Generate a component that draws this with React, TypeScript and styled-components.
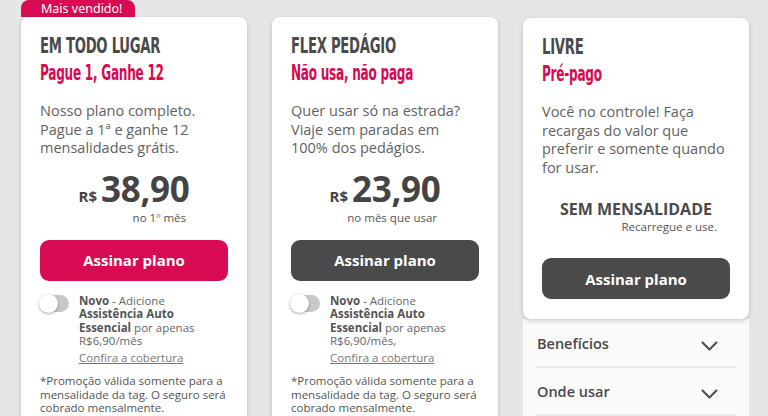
import React from 'react';
import styled, { createGlobalStyle } from 'styled-components';

const GlobalStyle = createGlobalStyle`
  body {
    margin: 0;
    background: #e6e6e6;
    font-family: 'Open Sans', 'Noto Sans', sans-serif;
    overflow: hidden;
  }
`;

const RED = '#d70a53';
const DARK = '#4a4a4a';

type Plan = {
  title: string;
  subtitle: string;
  desc: string;
  featured?: boolean;
  price?: string;
  priceNote?: string;
  extraNote?: string;
};

const plans: Plan[] = [
  {
    title: 'EM TODO LUGAR',
    subtitle: 'Pague 1, Ganhe 12',
    desc: 'Nosso plano completo. Pague a 1ª e ganhe 12 mensalidades grátis.',
    featured: true,
    price: '38,90',
    priceNote: 'no 1º mês',
    extraNote: 'R$6,90/mês',
  },
  {
    title: 'FLEX PEDÁGIO',
    subtitle: 'Não usa, não paga',
    desc: 'Quer usar só na estrada? Viaje sem paradas em 100% dos pedágios.',
    price: '23,90',
    priceNote: 'no mês que usar',
    extraNote: 'R$6,90/mês,',
  },
];

export default function App() {
  return (
    <>
      <GlobalStyle />
      <Page>
        {plans.map((p) => (
          <Column key={p.title}>
            <Tag $show={!!p.featured}>Mais vendido!</Tag>
            <Card>
              <Title>{p.title}</Title>
              <Subtitle>{p.subtitle}</Subtitle>
              <Desc>{p.desc}</Desc>
              <PriceBox>
                <PriceRow>
                  <Currency>R$</Currency>
                  <Amount>{p.price}</Amount>
                </PriceRow>
                <PriceNote>{p.priceNote}</PriceNote>
              </PriceBox>
              <SubscribeButton $primary={!!p.featured}>Assinar plano</SubscribeButton>
              <AddonRow>
                <Toggle>
                  <Knob />
                </Toggle>
                <AddonText>
                  <b>Novo</b> - Adicione <b>Assistência Auto Essencial</b> por apenas{' '}
                  {p.extraNote}
                  <AddonLink>Confira a cobertura</AddonLink>
                </AddonText>
              </AddonRow>
              <Footnote>
                *Promoção válida somente para a mensalidade da tag. O seguro será cobrado mensalmente.
              </Footnote>
            </Card>
          </Column>
        ))}
        <Column>
          <Tag $show={false}>Mais vendido!</Tag>
          <Card $short>
            <Title>LIVRE</Title>
            <Subtitle>Pré-pago</Subtitle>
            <Desc>Você no controle! Faça recargas do valor que preferir e somente quando for usar.</Desc>
            <NoFee>
              <NoFeeTitle>SEM MENSALIDADE</NoFeeTitle>
              <PriceNote>Recarregue e use.</PriceNote>
            </NoFee>
            <SubscribeButton $primary={false}>Assinar plano</SubscribeButton>
          </Card>
          <Accordion>
            {['Benefícios', 'Onde usar'].map((label) => (
              <AccordionItem key={label}>
                <span>{label}</span>
                <svg width="17" height="10" viewBox="0 0 17 10" fill="none">
                  <path d="M1.5 1.5l7 7 7-7" stroke="#4a4a4a" strokeWidth="2" strokeLinecap="round" strokeLinejoin="round" />
                </svg>
              </AccordionItem>
            ))}
          </Accordion>
        </Column>
      </Page>
    </>
  );
}

const Page = styled.div`
  display: flex;
  gap: 25px;
  padding-left: 21px;
  height: 416px;
  overflow: hidden;
`;

const Column = styled.div`
  width: 226px;
  display: flex;
  flex-direction: column;
`;

const Tag = styled.div<{ $show: boolean }>`
  visibility: ${(p) => (p.$show ? 'visible' : 'hidden')};
  align-self: flex-start;
  width: 114px;
  height: 18px;
  box-sizing: border-box;
  padding-left: 20px;
  background: ${RED};
  border-radius: 8px 8px 0 0;
  color: #fff;
  font-family: 'Noto Sans', sans-serif;
  font-size: 12.5px;
  line-height: 17px;
`;

const Card = styled.div<{ $short?: boolean }>`
  position: relative;
  z-index: 1;
  background: #fff;
  border-radius: 8px;
  box-shadow: 0 2px 5px rgba(0, 0, 0, 0.18);
  padding: 18px 19px ${(p) => (p.$short ? '20px' : '40px')};
  color: ${DARK};
`;

const Title = styled.div`
  font-family: 'DejaVu Sans Condensed', sans-serif;
  font-weight: bold;
  font-size: 21px;
  letter-spacing: -0.4px;
  line-height: 23px;
  color: #4a4a4a;
  white-space: nowrap;
  transform: scaleX(0.7);
  transform-origin: left center;
`;

const Subtitle = styled(Title)`
  color: ${RED};
  margin-top: 4px;
  transform: scaleX(0.64);
`;

const Desc = styled.p`
  margin: 17px 0 0;
  font-size: 14.5px;
  line-height: 18.5px;
  color: #626262;
`;

const PriceBox = styled.div`
  display: flex;
  flex-direction: column;
  align-items: center;
  margin-top: 12px;
`;

const PriceRow = styled.div`
  display: flex;
  align-items: baseline;
  gap: 4px;
  color: #444;
`;

const Currency = styled.span`
  font-size: 15px;
  font-weight: bold;
`;

const Amount = styled.span`
  font-size: 35px;
  font-weight: bold;
  line-height: 38px;
  letter-spacing: -0.3px;
`;

const PriceNote = styled.div`
  align-self: flex-end;
  margin-top: 3px;
  margin-right: 42px;
  font-size: 11.5px;
  color: #555;
  line-height: 14px;
`;

const NoFee = styled.div`
  display: flex;
  flex-direction: column;
  align-items: center;
  margin-top: 22px;
  margin-bottom: 24px;
  & > div:last-child {
    margin-top: 1px;
    margin-right: 13px;
  }
`;

const NoFeeTitle = styled.div`
  font-size: 16px;
  font-weight: bold;
  color: #4a4a4a;
  line-height: 20px;
`;

const SubscribeButton = styled.button<{ $primary: boolean }>`
  display: block;
  width: 100%;
  height: 41px;
  margin-top: 15px;
  border: none;
  border-radius: 9px;
  background: ${(p) => (p.$primary ? RED : DARK)};
  color: #fff;
  font-family: 'Open Sans', sans-serif;
  font-weight: bold;
  font-size: 15px;
  ${NoFee} + & {
    margin-top: 0;
  }
`;

const AddonRow = styled.div`
  display: flex;
  gap: 10px;
  margin-top: 13px;
`;

const Toggle = styled.div`
  position: relative;
  flex: none;
  width: 29px;
  height: 17px;
  margin-top: 1px;
  border-radius: 9px;
  background: #c8c8c8;
`;

const Knob = styled.div`
  position: absolute;
  left: -1px;
  top: -1px;
  width: 19px;
  height: 19px;
  border-radius: 50%;
  background: #fff;
  box-shadow: 0 1px 3px rgba(0, 0, 0, 0.35);
`;

const AddonText = styled.div`
  font-size: 11.5px;
  line-height: 13.5px;
  color: #666;
  b {
    color: #555;
  }
`;

const AddonLink = styled.a`
  display: block;
  margin-top: 3px;
  color: #777;
  text-decoration: underline;
`;

const Footnote = styled.p`
  margin: 10px 0 0;
  font-size: 11.5px;
  line-height: 13.5px;
  color: #555;
`;

const Accordion = styled.div`
  background: #fafafa;
  padding: 1px 14px 0;
`;

const AccordionItem = styled.div`
  display: flex;
  align-items: center;
  justify-content: space-between;
  height: 46px;
  border-bottom: 2px solid #e8e8e8;
  padding-right: 17px;
  font-size: 14.5px;
  font-weight: 600;
  color: #4a4a4a;
  svg {
    margin-top: 6px;
  }
`;
